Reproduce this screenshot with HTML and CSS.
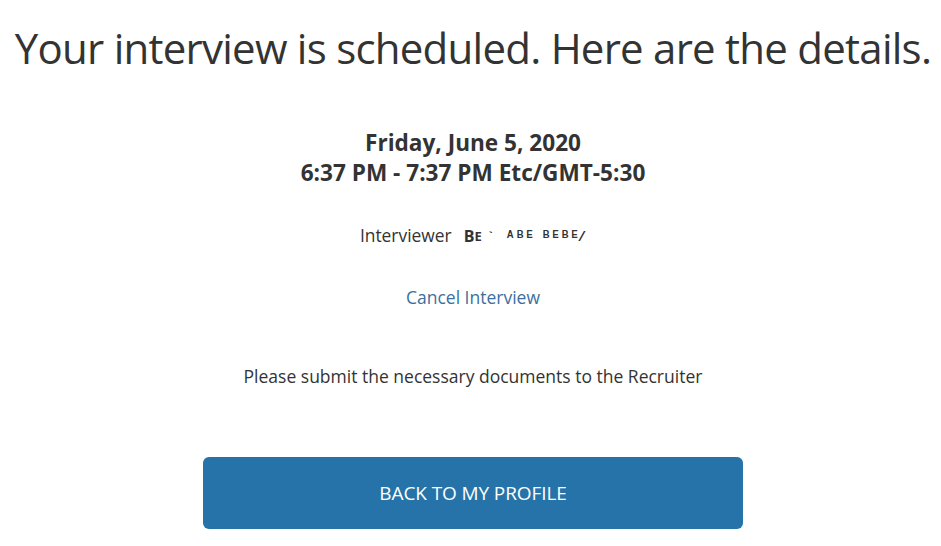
FILE: index.html
```html
<!DOCTYPE html>
<html>
<head>
<meta charset="utf-8">
<link rel="stylesheet" href="styles.css">
</head>
<body>
<main class="page">
  <h1 class="title">Your interview is scheduled. Here are the details.</h1>
  <div class="when">
    <div>Friday, June 5, 2020</div>
    <div>6:37 PM - 7:37 PM Etc/GMT-5:30</div>
  </div>
  <div class="interviewer">
    <span class="label">Interviewer</span>
    <span class="name"><span class="n1">B</span><span class="n2">E</span><span class="n3">`</span><span class="n4">ᴬᴮᴱ ᴮᴱᴮᴱ⁄</span></span>
  </div>
  <a class="cancel" href="#">Cancel Interview</a>
  <p class="note">Please submit the necessary documents to the Recruiter</p>
  <button class="back">BACK TO MY PROFILE</button>
</main>
</body>
</html>
```
FILE: styles.css
```css
html, body {
  margin: 0;
  padding: 0;
  background: #ffffff;
}
body {
  font-family: "Open Sans", "Liberation Sans", sans-serif;
  color: #333333;
}
.page {
  display: flex;
  flex-direction: column;
  align-items: center;
  width: 941px;
  padding-left: 5px;
  box-sizing: border-box;
}
.title {
  margin: 22px 0 0 0;
  font-size: 42px;
  font-weight: 400;
  line-height: 52px;
  letter-spacing: -0.75px;
  color: #333333;
  white-space: nowrap;
}
.when {
  margin-top: 54px;
  text-align: center;
  font-size: 22.6px;
  font-weight: 700;
  line-height: 30px;
  color: #333333;
}
.interviewer {
  margin-top: 35px;
  display: flex;
  align-items: baseline;
  gap: 12px;
  font-size: 17.4px;
  line-height: 24px;
  color: #333333;
}
.name {
  display: inline-flex;
  align-items: flex-start;
  font-weight: 700;
  font-size: 16px;
}
.n2 { font-size: 13px; }
.n3 { font-size: 11px; margin-left: 7px; }
.n4 { font-size: 14px; margin-left: 14px; letter-spacing: 3.4px; }
.cancel {
  margin-top: 37px;
  font-size: 17.5px;
  line-height: 24px;
  color: #3b70a0;
  text-decoration: none;
}
.note {
  margin: 55px 0 0 0;
  font-size: 17.5px;
  line-height: 24px;
  color: #333333;
}
.back {
  margin-top: 69px;
  width: 540px;
  height: 72px;
  border: none;
  border-radius: 6px;
  background: #2573a8;
  color: #ffffff;
  font-family: "Open Sans", "Liberation Sans", sans-serif;
  font-size: 19px;
  letter-spacing: -0.1px;
}
```
